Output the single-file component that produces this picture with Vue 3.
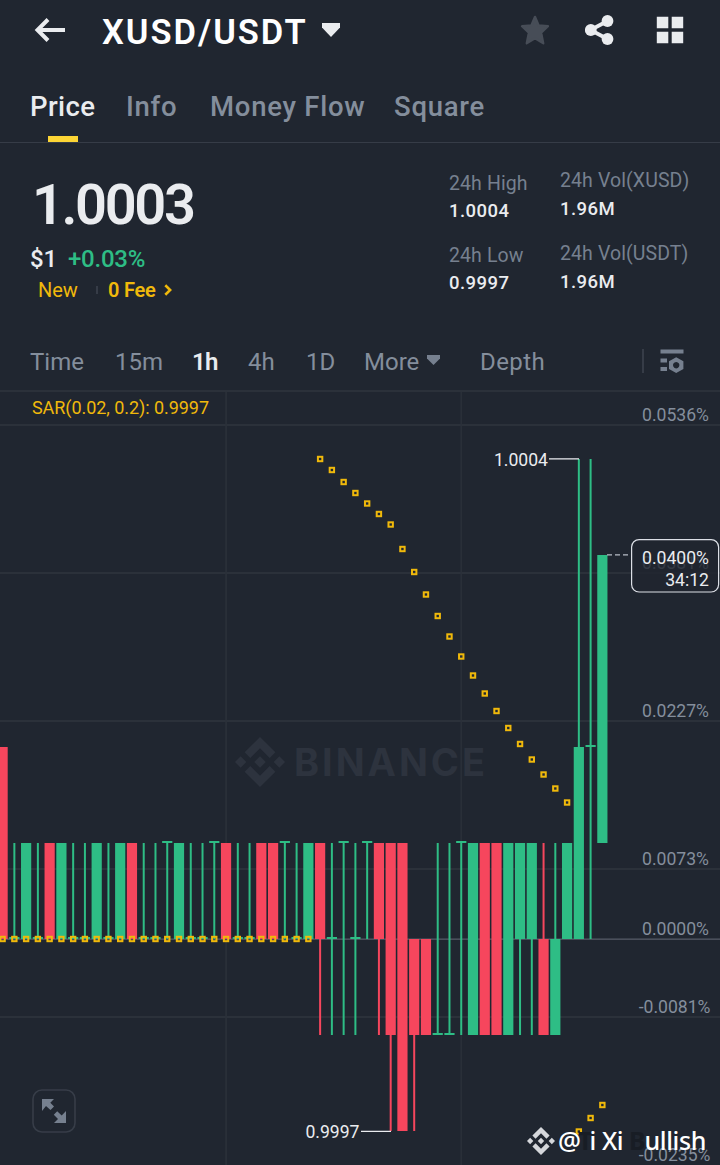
<script setup>
import {ref, computed} from "vue";

const tabs = ["Price", "Info", "Money Flow", "Square"]
const activeTab = ref("Price")

const intervals = ["Time", "15m", "1h", "4h", "1D", "More", "Depth"]
const activeInterval = ref("1h")

const stats = [
  [
    {label: "24h High", value: "1.0004"},
    {label: "24h Low", value: "0.9997"},
  ],
  [
    {label: "24h Vol(XUSD)", value: "1.96M"},
    {label: "24h Vol(USDT)", value: "1.96M"},
  ],
]

// [open, close, high, low] in ticks from the zero line
const up = [0, 1, 1, 0]
const down = [1, 0, 1, 0]
const flat = [0, 0, 1, 0]
const flatTop = [1, 1, 1, 0]
const data = [
  [2, 0, 2, 0], flat, up, flat, down, up, flat, flat, up, flat, up, down,
  flat, flat, flatTop, up, flat, flat, flatTop, down, flat, flat, down, down,
  flatTop, flat, up,
  [1, 0, 1, -1], [0, 0, 1, -1], [1, 1, 1, -1], [0, 0, 1, -1], flatTop,
  [1, 0, 1, -1], [1, -1, 1, -2], [1, -2, 1, -2], [0, -1, 0, -2], [0, -1, 0, -1],
  [-1, -1, 1, -1], [-1, -1, 1, -1], [1, 1, 1, -1],
  [-1, 1, 1, -1], [1, -1, 1, -1], [1, -1, 1, -1], [-1, 1, 1, -1],
  [0, 1, 1, -1], [0, 1, 1, -1], [0, -1, 1, -1], [-1, 0, 1, -1],
  up, [0, 2, 5, 0], [2, 2, 5, 0], [1, 4, 4, 1],
]

const sarFall = [459, 470, 482, 493, 503.5, 514, 524.5, 549, 572, 594.5, 616,
  636.5, 656.5, 675.5, 693.5, 711, 728, 744, 759.5, 774.5, 788.5, 802.5]
const sar = [...Array(27).fill(939), ...sarFall, 1131.5, 1118, 1105]

const xAt = (i) => 2.6 + i * 11.76
const yAt = (level) => 939 - level * 96

const candles = computed(() => data.map(([open, close, high, low], i) => {
  const isFlat = open === close
  return {
    x: xAt(i),
    high: yAt(high),
    low: yAt(low),
    top: yAt(Math.max(open, close)) - (isFlat ? 2 : 0),
    height: isFlat ? 2 : Math.abs(open - close) * 96,
    color: close < open ? "#f6465d" : "#2ebd85",
  }
}))

const gridRows = [425, 573, 721, 869, 1017]
const axis = [
  {y: 421, text: "0.0536%"},
  {y: 569, text: "0.0381%"},
  {y: 717, text: "0.0227%"},
  {y: 865, text: "0.0073%"},
  {y: 935, text: "0.0000%"},
  {y: 1013, text: "-0.0081%"},
  {y: 1161, text: "-0.0235%"},
]
</script>

<template>
  <main class="app">
    <header class="header">
      <svg class="back" width="32" height="26" viewBox="0 0 32 26">
        <path d="M14 2.5 L3.5 13 L14 23.5 M3.5 13 H31" fill="none" stroke="#eaecef" stroke-width="4"/>
      </svg>
      <h1>XUSD/USDT</h1>
      <svg class="caret" width="18" height="14" viewBox="0 0 18 14">
        <path d="M0 0H18V4.5L9 14L0 4.5Z" fill="#eaecef"/>
      </svg>
      <div class="actions">
        <svg width="30" height="30" viewBox="0 0 30 30">
          <path d="M16 1.8L19.6 10.3L29 11.2L22.2 17.8L24.3 28.3L16 23.2L7.7 28.3L9.8 17.8L3 11.2L12.4 10.3Z"
                fill="#474d57" stroke="#474d57" stroke-width="2.2" stroke-linejoin="round"/>
        </svg>
        <svg width="30" height="30" viewBox="0 0 30 30">
          <path d="M22.5 6L5.5 15L22.5 24" fill="none" stroke="#eaecef" stroke-width="3.8"/>
          <circle cx="22.5" cy="6" r="5.9" fill="#eaecef"/>
          <circle cx="5.8" cy="15" r="5.9" fill="#eaecef"/>
          <circle cx="22.5" cy="24" r="5.9" fill="#eaecef"/>
        </svg>
        <svg width="28" height="28" viewBox="0 0 28 28">
          <path d="M.8 .8h11.5v11.5H.8zM15.7 .8h11.5v11.5H15.7zM.8 15.7h11.5v11.5H.8zM15.7 15.7h11.5v11.5H15.7z"
                fill="#eaecef"/>
        </svg>
      </div>
    </header>

    <nav class="tabs">
      <span
          v-for="tab in tabs"
          :key="tab"
          :class="['tab', {active: tab === activeTab}]"
          @click="activeTab = tab">
        <span>{{ tab }}</span>
      </span>
    </nav>

    <section class="summary">
      <div class="quote">
        <div class="last">1.0003</div>
        <div class="change">
          <span>$1</span>
          <span class="green">+0.03%</span>
        </div>
        <div class="tags">
          <span class="new">New</span>
          <i></i>
          <span class="fee">0 Fee</span>
          <svg width="8" height="12" viewBox="0 0 8 12">
            <path d="M1.3 1.2L6.2 6L1.3 10.8" fill="none" stroke="#f0b90b" stroke-width="2.6"/>
          </svg>
        </div>
      </div>
      <div v-for="(column, index) in stats" :key="index" :class="['stats', 'col' + index]">
        <div v-for="item in column" :key="item.label" class="stat">
          <div class="label">{{ item.label }}</div>
          <div class="value">{{ item.value }}</div>
        </div>
      </div>
    </section>

    <nav class="intervals">
      <span
          v-for="item in intervals"
          :key="item"
          :class="['interval', {active: item === activeInterval}]"
          @click="activeInterval = item">
        {{ item }}
        <svg v-if="item === 'More'" width="13" height="10" viewBox="0 0 13 10">
          <path d="M0 0H13V3.5L6.5 10L0 3.5Z" fill="#76808f"/>
        </svg>
      </span>
      <span class="settings">
        <svg width="24" height="25" viewBox="0 0 24 25">
          <path d="M.5 .5h23v4H.5zM.5 9.5h6.5v4H.5zM.5 18h6.5v4H.5z" fill="#76808f"/>
          <path fill-rule="evenodd" fill="#76808f"
                d="M16.2 8.3L23.4 12.2V20L16.2 24L9 20V12.2ZM16.2 13a3.2 3.2 0 1 0 .01 0Z"/>
        </svg>
      </span>
    </nav>

    <svg class="chart" width="720" height="775" viewBox="0 390 720 775">
      <defs>
        <symbol id="logo" viewBox="0 0 126.6 126.6">
          <path d="M38.7 53.2L63.3 28.6L87.9 53.2L102.2 38.9L63.3 0L24.4 38.9Z"/>
          <path d="M38.7 73.4L63.3 98L87.9 73.4L102.2 87.7L63.3 126.6L24.4 87.7Z"/>
          <path d="M0 63.3L14.3 49L28.6 63.3L14.3 77.6Z"/>
          <path d="M98 63.3L112.3 49L126.6 63.3L112.3 77.6Z"/>
          <path d="M48.8 63.3L63.3 48.8L77.8 63.3L63.3 77.8Z"/>
        </symbol>
      </defs>

      <g fill="#2b313a">
        <rect x="0" y="390" width="720" height="2"/>
        <rect v-for="y in gridRows" :key="y" x="0" :y="y - 1" width="720" height="2"/>
        <rect x="225.3" y="392" width="1.6" height="773"/>
        <rect x="460.5" y="392" width="1.4" height="773"/>
      </g>

      <g fill="#2d333e">
        <use href="#logo" x="235" y="737" width="50" height="50"/>
        <text class="brand" x="294" y="776" textLength="191">BINANCE</text>
      </g>

      <rect x="0" y="938.5" width="720" height="1.3" fill="#555a66"/>

      <g v-for="(c, i) in candles" :key="i" :fill="c.color">
        <rect :x="c.x - 1" :y="c.high" width="2" :height="c.low - c.high"/>
        <rect :x="c.x - 5.1" :y="c.top" width="10.2" :height="c.height"/>
      </g>

      <g fill="none" stroke="#f0b90b" stroke-width="2">
        <rect v-for="(y, i) in sar" :key="i" :x="xAt(i) - 2.2" :y="y - 2.2" width="4.4" height="4.4"/>
      </g>

      <text class="sar" x="32" y="414" textLength="177">SAR(0.02, 0.2): 0.9997</text>

      <g class="axis">
        <text v-for="row in axis" :key="row.y" :x="row.text[0] === '-' ? 710.5 : 709" :y="row.y">{{ row.text }}</text>
      </g>

      <g class="mark">
        <path d="M549 458.8H579M361 1131.3H391" stroke="#eaecef" stroke-width="1.3"/>
        <text x="494" y="466" textLength="54">1.0004</text>
        <text x="305.5" y="1138" textLength="54">0.9997</text>
      </g>

      <path d="M607 554.8H629" stroke="#b7bdc6" stroke-width="1.3" stroke-dasharray="5 3"/>
      <rect x="631.6" y="539.6" width="87" height="52.4" rx="7.5" fill="#202630" fill-opacity=".8"
            stroke="#dcdfe6" stroke-width="1.2"/>
      <g class="mark end">
        <text x="709" y="564">0.0400%</text>
        <text x="709" y="586">34:12</text>
      </g>

      <rect x="33" y="1090" width="42" height="42" rx="9" fill="none" stroke="#373d48" stroke-width="1.6"/>
      <path d="M42 1099H54L50.3 1102.7L54 1106.5L50.5 1110L46 1106L42 1111ZM66 1123H54L58 1119L53.8 1114.8L57.2 1111.3L61.7 1115.5L66 1111Z"
            fill="#76808f"/>

      <use href="#logo" x="527" y="1127" width="28" height="28" fill="#d5d7db"/>
      <g class="signature">
        <text class="ghost" x="578" y="1150">T</text>
        <text class="ghost" x="629" y="1150">B</text>
        <text x="558" y="1149.5" textLength="23" lengthAdjust="spacingAndGlyphs">@</text>
        <text x="589.5" y="1149.5">i</text>
        <text x="602" y="1149.5" textLength="21.5">Xi</text>
        <text x="644.5" y="1149.5" textLength="62">ullish</text>
      </g>
    </svg>
  </main>
</template>

<style>
body {
  background-color: #202630;
}
</style>

<style scoped>
.app {
  width: 720px;
  height: 1165px;
  overflow: hidden;
  background-color: #202630;
  color: #eaecef;
  font-family: Roboto, "Noto Sans", sans-serif;
}

.header {
  display: flex;
  align-items: center;
  height: 62px;
  padding: 0 36px 0 34px;
  box-sizing: border-box;
}

.header svg {
  display: block;
  flex: none;
}

.back {
  margin-top: -2px;
}

h1 {
  width: 220px;
  margin: 2px 0 0 36px;
  color: #ffffff;
  font-size: 34.5px;
  font-weight: 600;
  line-height: 40px;
  letter-spacing: 2px;
}

.caret {
  margin-top: -2px;
}

.actions {
  display: flex;
  align-items: center;
  gap: 36px;
  margin: -2px 0 0 auto;
}

.actions svg:last-child {
  margin-left: 5px;
}

.tabs {
  display: grid;
  grid-template-columns: 96px 84px 184px 130px;
  height: 81px;
  padding-left: 30px;
  box-sizing: border-box;
  border-bottom: 1px solid #363c47;
}

.tab {
  position: relative;
  padding-top: 28px;
  color: #848e9c;
  font-size: 27.5px;
  font-weight: 500;
  line-height: 34px;
  letter-spacing: .75px;
  white-space: nowrap;
  cursor: pointer;
}

.tab.active {
  color: #eaecef;
  letter-spacing: .4px;
}

.tab.active::after {
  content: "";
  position: absolute;
  left: 18px;
  bottom: 0;
  width: 30px;
  height: 6px;
  background-color: #fcd535;
}

.summary {
  display: flex;
  height: 189px;
  padding-left: 30px;
  box-sizing: border-box;
}

.quote {
  width: 419px;
}

.last {
  margin: 29px 0 0 2px;
  font-size: 56px;
  font-weight: 600;
  line-height: 66px;
  letter-spacing: -2.4px;
}

.change {
  display: flex;
  gap: 11px;
  margin-top: 6px;
  font-size: 24px;
  font-weight: 500;
  line-height: 30px;
  letter-spacing: -.2px;
}

.green {
  color: #2ebd85;
}

.tags {
  display: flex;
  align-items: center;
  height: 24px;
  margin-top: 4px;
  padding-left: 8px;
  color: #f0b90b;
  font-size: 20px;
}

.tags i {
  width: 2px;
  height: 8px;
  margin: 0 10px 0 18px;
  background-color: #363c47;
}

.fee {
  margin-right: 8px;
  font-weight: 600;
  letter-spacing: -.2px;
}

.stats {
  width: 111px;
  padding-top: 28px;
}

.col1 {
  width: 150px;
  padding-top: 25px;
}

.stat {
  height: 72px;
  white-space: nowrap;
}

.col1 .stat {
  height: 73px;
}

.label {
  color: #76808f;
  font-size: 19.5px;
  line-height: 25px;
  letter-spacing: .1px;
}

.value {
  margin-top: 3px;
  font-size: 18.5px;
  font-weight: 500;
  line-height: 25px;
  letter-spacing: .45px;
}

.col1 .value {
  margin-top: 4px;
}

.intervals {
  display: grid;
  grid-template-columns: 85px 77px 56px 58px 58px 116px 162px 60px;
  align-items: center;
  height: 58px;
  padding-left: 30px;
}

.interval {
  padding-top: 1px;
  color: #848e9c;
  font-size: 24px;
  line-height: 30px;
  letter-spacing: 0;
  white-space: nowrap;
  cursor: pointer;
}

.interval:last-of-type,
.interval:nth-child(7) {
  letter-spacing: .4px;
}

.interval.active {
  color: #eaecef;
  font-weight: 600;
  letter-spacing: -.8px;
}

.interval svg {
  margin: 0 0 5px 2px;
}

.settings {
  height: 24px;
  padding-left: 16px;
  border-left: 2px solid #363c47;
}

.settings svg {
  display: block;
}

.chart {
  display: block;
}

.brand {
  font-family: Inter, sans-serif;
  font-size: 38px;
  font-weight: 700;
}

.sar {
  fill: #f0b90b;
  font-size: 18px;
}

.axis {
  fill: #848e9c;
  font-size: 17.6px;
  text-anchor: end;
}

.mark {
  fill: #eaecef;
  font-size: 17.6px;
}

.end {
  text-anchor: end;
}

.signature {
  fill: #ffffff;
  font-family: "Noto Sans", sans-serif;
  font-size: 25px;
  font-weight: 500;
}

.ghost {
  fill: #181d25;
  font-weight: 700;
}
</style>
